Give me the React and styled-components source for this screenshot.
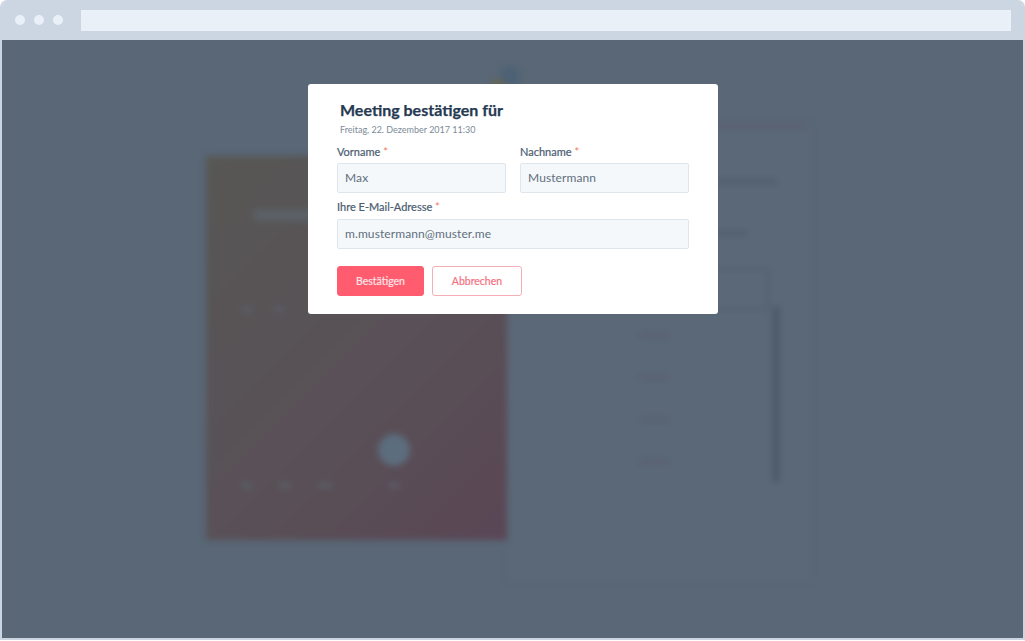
import React from 'react';
import styled, { createGlobalStyle } from 'styled-components';

const GlobalStyle = createGlobalStyle`
  html, body {
    margin: 0;
    padding: 0;
    background: #fff;
    font-family: Lato, "Open Sans", sans-serif;
  }
  * {
    box-sizing: border-box;
  }
`;

const BrowserFrame = styled.div`
  width: 1025px;
  height: 640px;
  display: flex;
  flex-direction: column;
  overflow: hidden;
  border: 2px solid #cbd6e2;
  border-top: 0;
  border-radius: 7px 7px 0 0;
`;

const Toolbar = styled.div`
  flex: 0 0 40px;
  display: flex;
  align-items: center;
  gap: 9px;
  padding: 0 12px 0 13px;
  background: #cbd6e2;
`;

const Dot = styled.span`
  width: 10px;
  height: 10px;
  border-radius: 50%;
  background: #eaf0f8;
`;

const AddressBar = styled.div`
  flex: 1;
  height: 21px;
  margin-left: 9px;
  background: #eaf0f8;
`;

const Stage = styled.div`
  position: relative;
  flex: 1;
  overflow: hidden;
  background: #596776;
`;

const Backdrop = styled.div`
  height: 100%;
  padding-left: 204px;
  display: flex;
  align-items: flex-start;
  filter: blur(3px);
`;

const Hero = styled.div`
  width: 301px;
  height: 384px;
  margin-top: 116px;
  padding: 53px 0 0 48px;
  display: flex;
  flex-direction: column;
  background: linear-gradient(135deg, #575755 0%, #595157 55%, #5a4655 100%);
`;

const HeroTitle = styled.div`
  width: 84px;
  height: 12px;
  background: #5a6167;
`;

const MarkRow = styled.div`
  display: flex;
  align-items: center;
  gap: ${({ $gap }) => $gap}px;
  margin-top: ${({ $top }) => $top}px;
  margin-left: ${({ $left }) => $left || 0}px;
`;

const Mark = styled.span`
  width: ${({ $w }) => $w || 10}px;
  height: 5px;
  background: #5a5f69;
`;

const SelectedDay = styled.span`
  width: 32px;
  height: 32px;
  margin-left: 124px;
  border-radius: 50%;
  background: #5c6d7d;
`;

const SideColumn = styled.div`
  position: relative;
  width: 303px;
  height: 456px;
  margin-top: 84px;
  display: flex;
  flex-direction: column;
  background: #5a6877;
`;

const Logo = styled.svg`
  position: absolute;
  top: -58px;
  left: -17px;
  width: 34px;
  height: 34px;
`;

const TextLine = styled.div`
  width: ${({ $w }) => $w}px;
  height: 5px;
  margin-top: ${({ $top }) => $top}px;
  margin-left: ${({ $left }) => $left}px;
  background: ${({ $tone }) => $tone || '#505d6c'};
`;

const Dropdown = styled.div`
  width: 262px;
  height: 42px;
  margin-top: 32px;
  border: 2px solid #515d6d;
  border-left: 0;
`;

const TimeList = styled.div`
  position: relative;
  display: flex;
  flex-direction: column;
  gap: 37px;
  padding: 23px 0 0 132px;
`;

const TimeItem = styled.span`
  width: 30px;
  height: 5px;
  background: #5b6070;
`;

const ScrollBar = styled.div`
  position: absolute;
  top: -4px;
  left: 265px;
  width: 8px;
  height: 176px;
  background: #4e5b6a;
`;

const Modal = styled.div`
  position: absolute;
  top: 44px;
  left: 306px;
  width: 410px;
  height: 230px;
  padding: 16px 28px 0 29px;
  border-radius: 3px;
  background: #fff;
`;

const ModalHeader = styled.div`
  padding-left: 3px;
`;

const Title = styled.h2`
  margin: 0;
  font-size: 16px;
  line-height: 20px;
  font-weight: 700;
  color: #253a52;
  -webkit-text-stroke: 0.25px #253a52;
`;

const Subtitle = styled.p`
  margin: 3px 0 0;
  font-size: 9px;
  line-height: 13px;
  color: #7c8a98;
`;

const FormGrid = styled.div`
  display: grid;
  grid-template-columns: 169px 169px;
  column-gap: 14px;
  row-gap: 7px;
  margin-top: 9px;
`;

const Field = styled.label`
  display: block;
  grid-column: ${({ $wide }) => ($wide ? '1 / -1' : 'auto')};
`;

const LabelText = styled.span`
  display: block;
  font-size: 11px;
  line-height: 14px;
  color: #4a5c70;
  -webkit-text-stroke: 0.2px #4a5c70;
  margin-bottom: ${({ $wide }) => ($wide ? 5 : 4)}px;
`;

const Required = styled.span`
  color: #f2785c;
  -webkit-text-stroke: 0;
`;

const Input = styled.input`
  display: block;
  width: 100%;
  height: 30px;
  padding: 0 7px 1px;
  border: 1px solid #dfe5ec;
  border-radius: 2px;
  background: #f5f8fa;
  font-family: Lato, "Open Sans", sans-serif;
  font-size: 12px;
  letter-spacing: 0.1px;
  color: #5f6f7f;
  outline: none;
`;

const Actions = styled.div`
  display: flex;
  gap: 8px;
  margin-top: 17px;
`;

const Button = styled.button`
  width: ${({ $w }) => $w}px;
  height: 30px;
  padding: 0;
  border: 1px solid ${({ $outline }) => ($outline ? '#f3aeb6' : '#ff5c70')};
  border-radius: 3px;
  background: ${({ $outline }) => ($outline ? '#fff' : '#ff5c70')};
  color: ${({ $outline }) => ($outline ? '#f5727f' : '#fde4e7')};
  font-family: Lato, "Open Sans", sans-serif;
  font-size: 10.5px;
  -webkit-text-stroke: 0.2px currentColor;
`;

function FormField({ label, value, wide }) {
  return (
    <Field $wide={wide}>
      <LabelText $wide={wide}>
        {label} <Required>*</Required>
      </LabelText>
      <Input defaultValue={value} />
    </Field>
  );
}

export default function App() {
  return (
    <>
      <GlobalStyle />
      <BrowserFrame>
        <Toolbar>
          <Dot />
          <Dot />
          <Dot />
          <AddressBar />
        </Toolbar>
        <Stage>
          <Backdrop>
            <Hero>
              <HeroTitle />
              <MarkRow $gap={22} $top={86} $left={-12}>
                <Mark />
                <Mark />
              </MarkRow>
              <MarkRow $gap={0} $top={122}>
                <SelectedDay />
              </MarkRow>
              <MarkRow $gap={28} $top={17} $left={-12}>
                <Mark />
                <Mark />
                <Mark $w={14} />
                <Mark $w={1} />
                <Mark />
              </MarkRow>
            </Hero>
            <SideColumn>
              <Logo viewBox="0 0 34 34">
                <circle cx="20" cy="10" r="10" fill="#4d6175" />
                <circle cx="8" cy="20" r="7" fill="#66664f" />
              </Logo>
              <TextLine $w={90} $top={0} $left={210} $tone="#5d6071" />
              <TextLine $w={60} $top={50} $left={210} />
              <TextLine $w={30} $top={47} $left={210} />
              <Dropdown />
              <TimeList>
                <ScrollBar />
                <TimeItem />
                <TimeItem />
                <TimeItem />
                <TimeItem />
              </TimeList>
            </SideColumn>
          </Backdrop>
          <Modal>
            <ModalHeader>
              <Title>Meeting bestätigen für</Title>
              <Subtitle>Freitag, 22. Dezember 2017 11:30</Subtitle>
            </ModalHeader>
            <FormGrid>
              <FormField label="Vorname" value="Max" />
              <FormField label="Nachname" value="Mustermann" />
              <FormField label="Ihre E-Mail-Adresse" value="m.mustermann@muster.me" wide />
            </FormGrid>
            <Actions>
              <Button $w={87}>Bestätigen</Button>
              <Button $w={90} $outline>Abbrechen</Button>
            </Actions>
          </Modal>
        </Stage>
      </BrowserFrame>
    </>
  );
}
